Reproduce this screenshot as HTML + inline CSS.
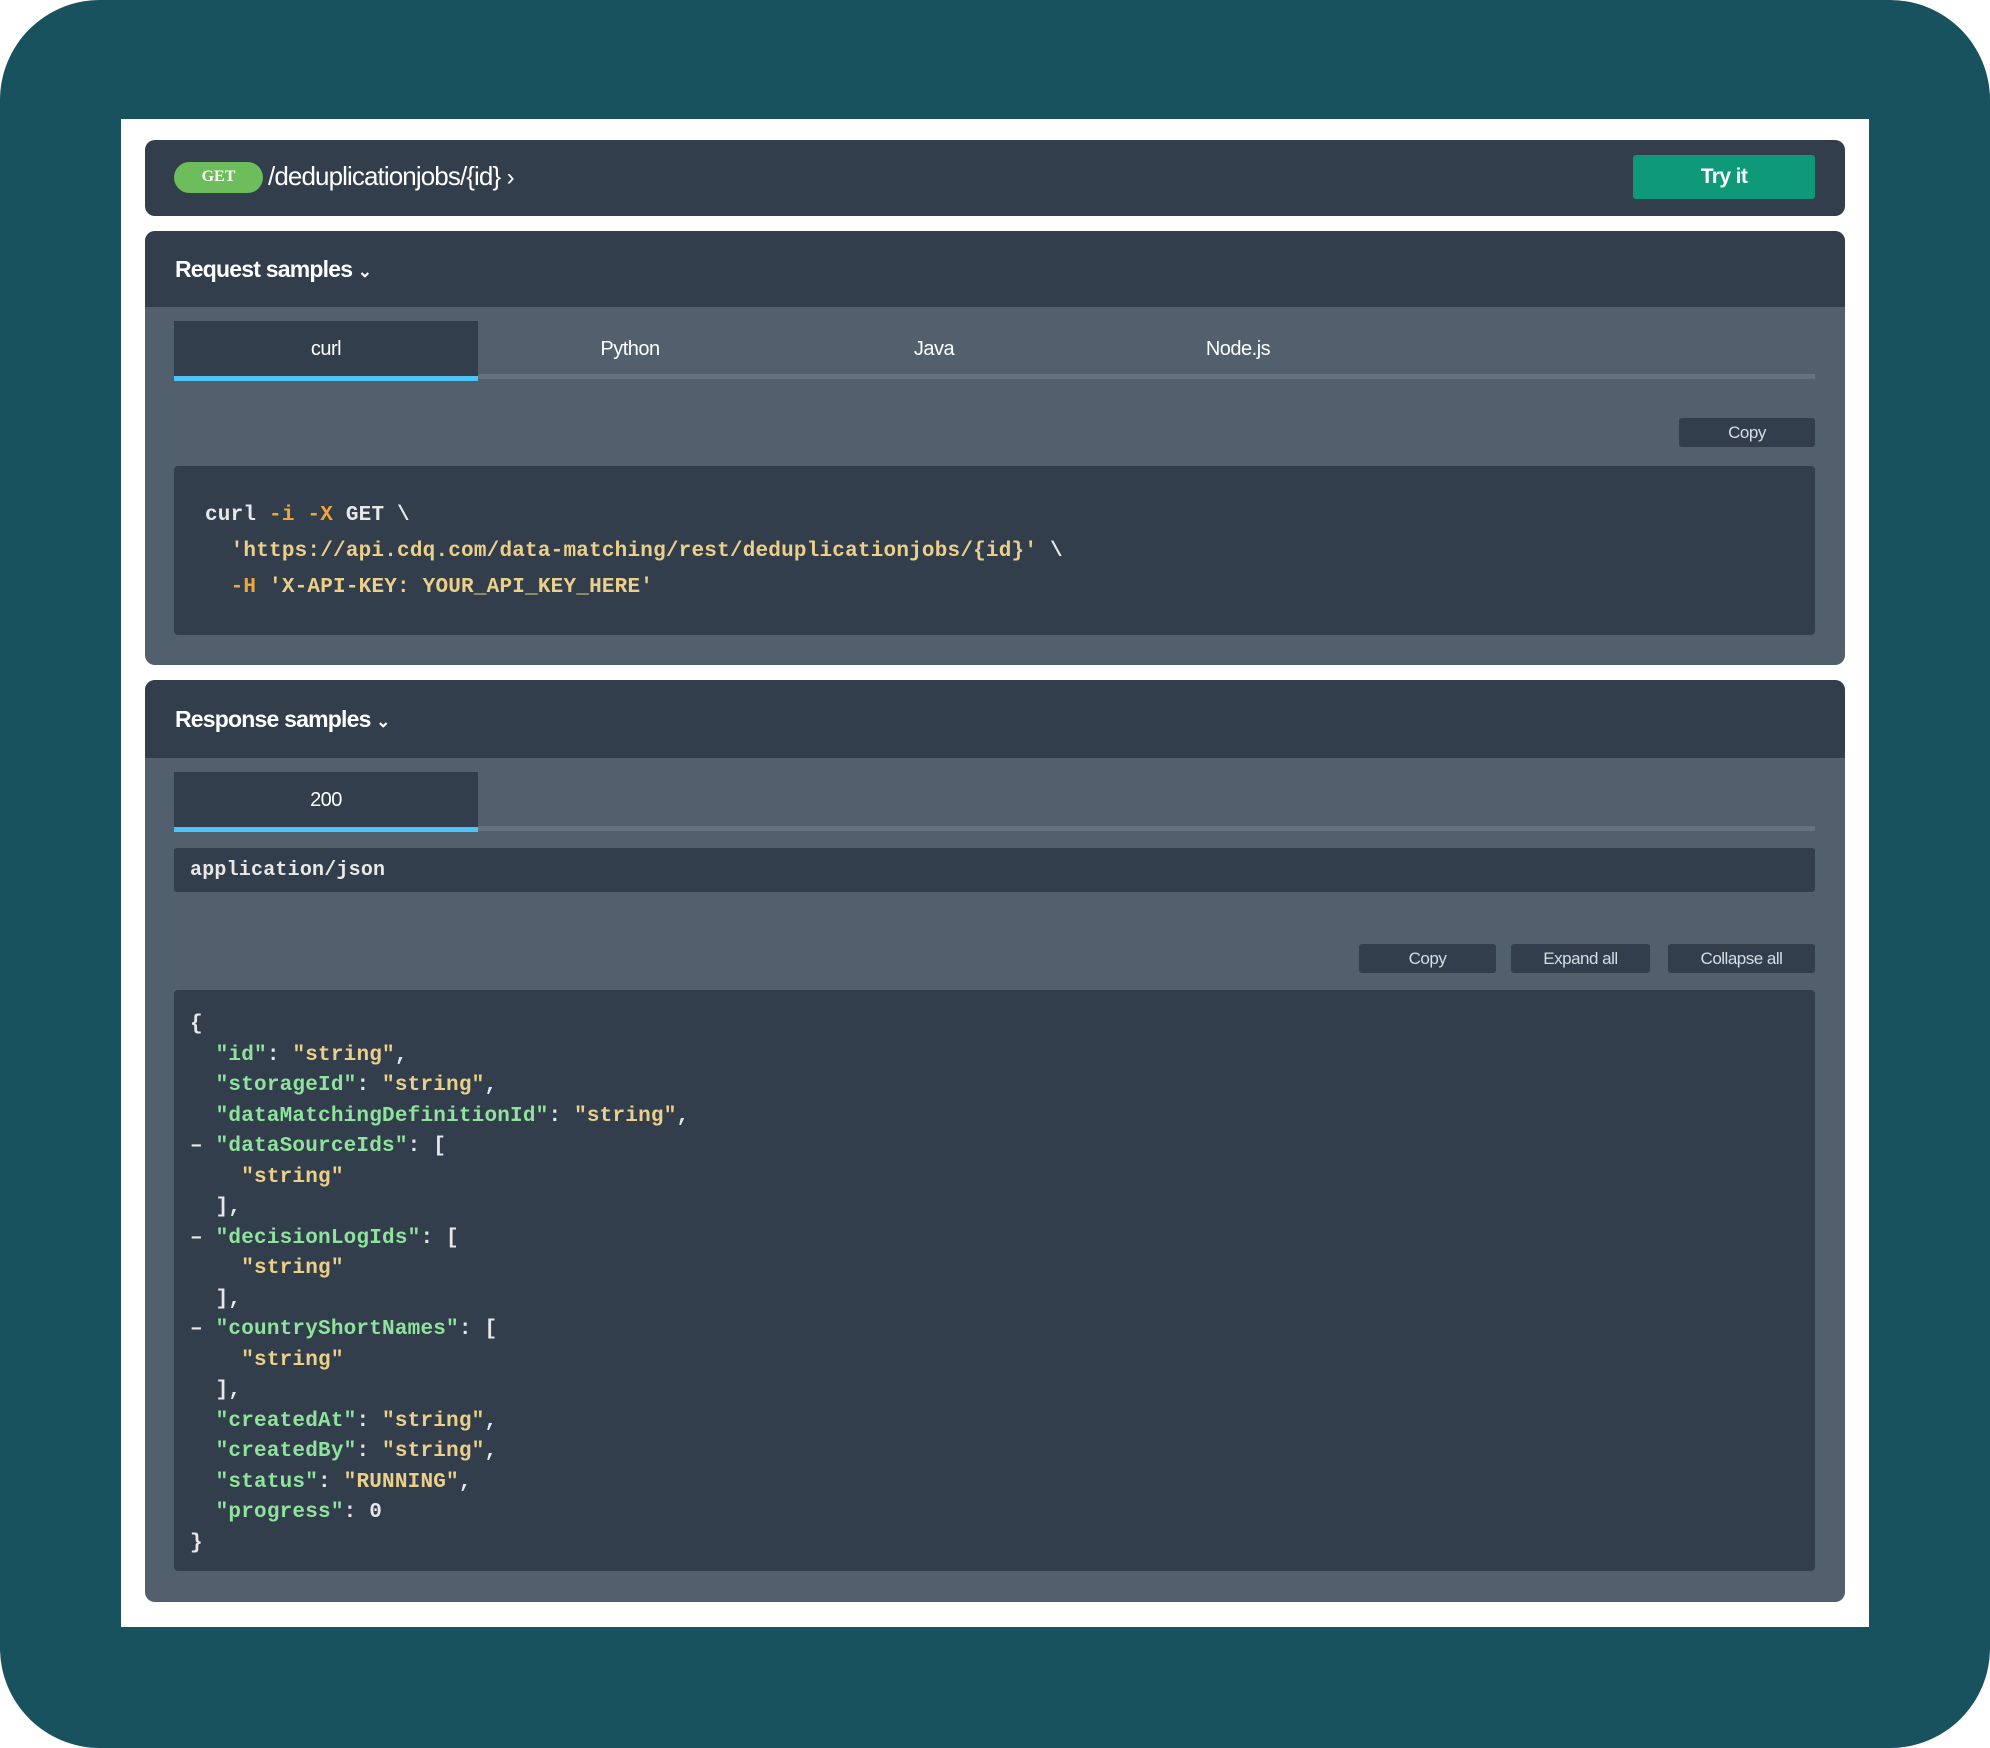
<!DOCTYPE html>
<html><head><meta charset="utf-8"><style>
*{box-sizing:border-box;margin:0;padding:0}
body{width:1990px;height:1748px;background:#fff;position:relative;overflow:hidden;font-family:"Liberation Sans Narrow","Liberation Sans",sans-serif}
.bg{position:absolute;left:0;top:0;width:1990px;height:1748px;background:#19525f;border-radius:100px}
.white{position:absolute;left:121px;top:119px;width:1748px;height:1508px;background:#fff}
.abs{position:absolute}
.dark{background:#323e4b}
.light{background:#525f6d}
.t{color:#fff;font-weight:bold;letter-spacing:-0.8px}
.mono{font-family:"Liberation Mono",monospace;font-size:21px;font-weight:bold;color:#e8e8e8;white-space:pre;letter-spacing:0.2px}
.btn{position:absolute;background:#323e4b;color:#d8dde2;font-size:17px;text-align:center;line-height:29px;border-radius:3px;letter-spacing:-0.5px}
.tab{letter-spacing:-0.5px}
.k{color:#8fe39c}.s{color:#ecd08a}.o{color:#f2a53a}
</style></head><body>
<div class="bg"></div>
<div class="white"></div>
<!-- header -->
<div class="abs dark" style="left:145px;top:140px;width:1700px;height:76px;border-radius:10px"></div>
<div class="abs" style="left:174px;top:162px;width:89px;height:31px;border-radius:16px;background:#6dbd5c;color:#fff;font-family:'Liberation Serif',serif;font-size:16px;font-weight:bold;text-align:center;line-height:30px">GET</div>
<div class="abs" style="left:268px;top:161px;color:#fff;font-size:26px;letter-spacing:-0.9px">/deduplicationjobs/{id} <span style="font-size:24px">›</span></div>
<div class="abs" style="left:1633px;top:155px;width:182px;height:44px;background:#0e9a78;border-radius:3px;color:#fff;font-weight:bold;font-size:21px;text-align:center;line-height:44px;letter-spacing:-0.6px">Try it</div>
<!-- request -->
<div class="abs light" style="left:145px;top:231px;width:1700px;height:434px;border-radius:10px;overflow:hidden">
 <div class="dark" style="height:76px"></div>
</div>
<div class="abs t" style="left:175px;top:256px;font-size:23px">Request samples <span style="font-size:17px">⌄</span></div>
<div class="abs" style="left:174px;top:374px;width:1641px;height:5px;background:#66727f"></div>
<div class="abs dark tab" style="left:174px;top:321px;width:304px;height:55px;color:#fff;font-size:20px;text-align:center;line-height:57px">curl</div>
<div class="abs" style="left:174px;top:376px;width:304px;height:5px;background:#4fc3f7"></div>
<div class="abs tab" style="left:478px;top:321px;width:304px;line-height:57px;text-align:center;color:#fff;font-size:20px">Python</div>
<div class="abs tab" style="left:782px;top:321px;width:304px;line-height:57px;text-align:center;color:#fff;font-size:20px">Java</div>
<div class="abs tab" style="left:1086px;top:321px;width:304px;line-height:57px;text-align:center;color:#fff;font-size:20px">Node.js</div>
<div class="btn" style="left:1679px;top:418px;width:136px">Copy</div>
<div class="abs dark" style="left:174px;top:466px;width:1641px;height:169px;border-radius:4px"></div>
<div class="abs mono" style="left:205px;top:498px;line-height:36px">curl <span class="o">-i</span> <span class="o">-X</span> GET \
  <span class="s">'https://api.cdq.com/data-matching/rest/deduplicationjobs/{id}'</span> \
  <span class="o">-H</span> <span class="s">'X-API-KEY: YOUR_API_KEY_HERE'</span></div>
<!-- response -->
<div class="abs light" style="left:145px;top:680px;width:1700px;height:922px;border-radius:10px;overflow:hidden">
 <div class="dark" style="height:78px"></div>
</div>
<div class="abs t" style="left:175px;top:706px;font-size:23px">Response samples <span style="font-size:17px">⌄</span></div>
<div class="abs" style="left:174px;top:826px;width:1641px;height:5px;background:#66727f"></div>
<div class="abs dark tab" style="left:174px;top:772px;width:304px;height:55px;color:#fff;font-size:20px;text-align:center;line-height:57px">200</div>
<div class="abs" style="left:174px;top:827px;width:304px;height:5px;background:#4fc3f7"></div>
<div class="abs dark mono" style="left:174px;top:848px;width:1641px;height:44px;border-radius:3px;line-height:46px;padding-left:16px;font-size:20px">application/json</div>
<div class="btn" style="left:1359px;top:944px;width:137px">Copy</div>
<div class="btn" style="left:1511px;top:944px;width:139px">Expand all</div>
<div class="btn" style="left:1668px;top:944px;width:147px">Collapse all</div>
<div class="abs dark" style="left:174px;top:990px;width:1641px;height:581px;border-radius:4px"></div>
<div class="abs mono" style="left:190px;top:1010px;line-height:30.5px">{
  <span class="k">"id"</span>: <span class="s">"string"</span>,
  <span class="k">"storageId"</span>: <span class="s">"string"</span>,
  <span class="k">"dataMatchingDefinitionId"</span>: <span class="s">"string"</span>,
– <span class="k">"dataSourceIds"</span>: [
    <span class="s">"string"</span>
  ],
– <span class="k">"decisionLogIds"</span>: [
    <span class="s">"string"</span>
  ],
– <span class="k">"countryShortNames"</span>: [
    <span class="s">"string"</span>
  ],
  <span class="k">"createdAt"</span>: <span class="s">"string"</span>,
  <span class="k">"createdBy"</span>: <span class="s">"string"</span>,
  <span class="k">"status"</span>: <span class="s">"RUNNING"</span>,
  <span class="k">"progress"</span>: 0
}</div>
</body></html>
